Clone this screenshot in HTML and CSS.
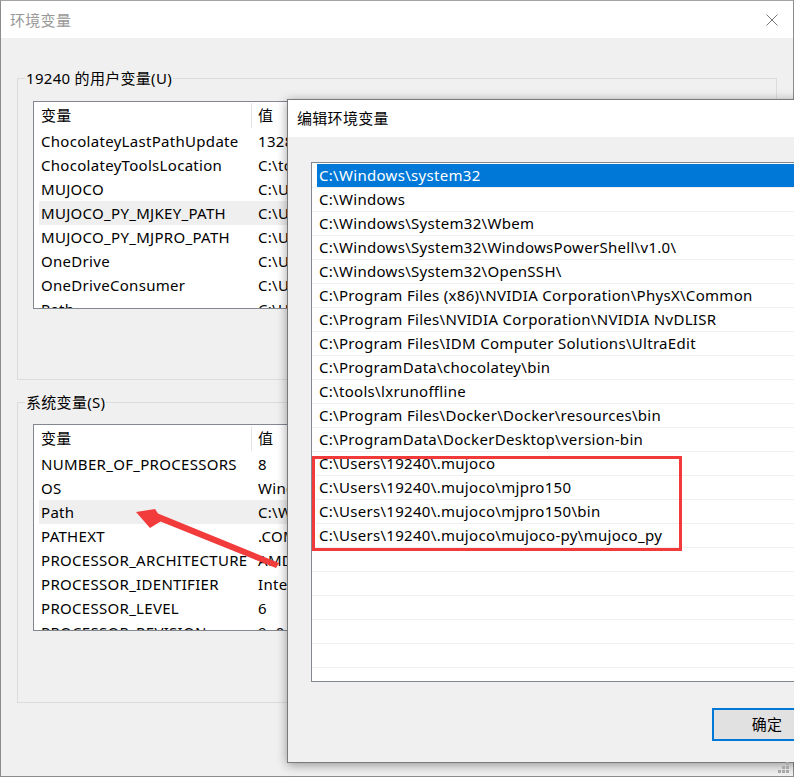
FILE: index.html
```html
<!DOCTYPE html>
<html lang="zh-CN">
<head>
<meta charset="utf-8">
<title>环境变量</title>
<link rel="stylesheet" href="styles.css">
</head>
<body>
<div class="screen">
  <div class="win">
    <div class="titlebar">
      <span class="title">环境变量</span>
      <svg class="close" width="12" height="12" viewBox="0 0 12 12"><path d="M0.5 0.5 L11.5 11.5 M11.5 0.5 L0.5 11.5" stroke="#777" stroke-width="1" fill="none"/></svg>
    </div>
    <div class="content">
      <div class="group g1">
        <div class="legend">19240 的用户变量(U)</div>
        <div class="list ulist">
          <div class="lhead"><div class="hc1">变量</div><div class="hc2">值</div></div>
          <div class="row"><div class="c1">ChocolateyLastPathUpdate</div><div class="c2">132847293847562</div></div>
          <div class="row"><div class="c1">ChocolateyToolsLocation</div><div class="c2">C:\tools</div></div>
          <div class="row"><div class="c1">MUJOCO</div><div class="c2">C:\Users\19240\.mujoco</div></div>
          <div class="row hover"><div class="c1">MUJOCO_PY_MJKEY_PATH</div><div class="c2">C:\Users\19240\.mujoco\mjkey.txt</div></div>
          <div class="row"><div class="c1">MUJOCO_PY_MJPRO_PATH</div><div class="c2">C:\Users\19240\.mujoco\mjpro150</div></div>
          <div class="row"><div class="c1">OneDrive</div><div class="c2">C:\Users\19240\OneDrive</div></div>
          <div class="row"><div class="c1">OneDriveConsumer</div><div class="c2">C:\Users\19240\OneDrive</div></div>
          <div class="row"><div class="c1">Path</div><div class="c2">C:\Users\19240\AppData\Local</div></div>
        </div>
      </div>
      <div class="group g2">
        <div class="legend">系统变量(S)</div>
        <div class="list slist">
          <div class="lhead"><div class="hc1">变量</div><div class="hc2">值</div></div>
          <div class="row"><div class="c1">NUMBER_OF_PROCESSORS</div><div class="c2">8</div></div>
          <div class="row"><div class="c1">OS</div><div class="c2">Windows_NT</div></div>
          <div class="row hover"><div class="c1">Path</div><div class="c2">C:\Windows\system32</div></div>
          <div class="row"><div class="c1">PATHEXT</div><div class="c2">.COM;.EXE;.BAT</div></div>
          <div class="row"><div class="c1">PROCESSOR_ARCHITECTURE</div><div class="c2">AMD64</div></div>
          <div class="row"><div class="c1">PROCESSOR_IDENTIFIER</div><div class="c2">Intel64 Family 6</div></div>
          <div class="row"><div class="c1">PROCESSOR_LEVEL</div><div class="c2">6</div></div>
          <div class="row"><div class="c1">PROCESSOR_REVISION</div><div class="c2">9e0a</div></div>
        </div>
      </div>
    </div>
    <svg class="arrow" width="300" height="600" viewBox="0 0 300 600">
      <polygon points="136,512 155,509 158,513.5 279,563 276,568 160.5,521.5 150,528" fill="#f23c3c"/>
    </svg>
    <svg class="grip" width="12" height="12" viewBox="0 0 12 12" fill="#a8a8a8">
      <rect x="8" y="0" width="3" height="3"/>
      <rect x="4" y="4" width="3" height="3"/><rect x="8" y="4" width="3" height="3"/>
      <rect x="0" y="8" width="3" height="3"/><rect x="4" y="8" width="3" height="3"/><rect x="8" y="8" width="3" height="3"/>
    </svg>
  </div>

  <div class="dialog">
    <div class="dtitle">编辑环境变量</div>
    <div class="dbody">
      <div class="elist">
        <div class="item sel"><div class="t">C:\Windows\system32</div></div>
        <div class="item"><div class="t">C:\Windows</div></div>
        <div class="item"><div class="t">C:\Windows\System32\Wbem</div></div>
        <div class="item"><div class="t">C:\Windows\System32\WindowsPowerShell\v1.0\</div></div>
        <div class="item"><div class="t">C:\Windows\System32\OpenSSH\</div></div>
        <div class="item"><div class="t">C:\Program Files (x86)\NVIDIA Corporation\PhysX\Common</div></div>
        <div class="item"><div class="t">C:\Program Files\NVIDIA Corporation\NVIDIA NvDLISR</div></div>
        <div class="item"><div class="t">C:\Program Files\IDM Computer Solutions\UltraEdit</div></div>
        <div class="item"><div class="t">C:\ProgramData\chocolatey\bin</div></div>
        <div class="item"><div class="t">C:\tools\lxrunoffline</div></div>
        <div class="item"><div class="t">C:\Program Files\Docker\Docker\resources\bin</div></div>
        <div class="item"><div class="t">C:\ProgramData\DockerDesktop\version-bin</div></div>
        <div class="item"><div class="t">C:\Users\19240\.mujoco</div></div>
        <div class="item"><div class="t">C:\Users\19240\.mujoco\mjpro150</div></div>
        <div class="item"><div class="t">C:\Users\19240\.mujoco\mjpro150\bin</div></div>
        <div class="item"><div class="t">C:\Users\19240\.mujoco\mujoco-py\mujoco_py</div></div>
        <div class="item"><div class="t"></div></div>
        <div class="item"><div class="t"></div></div>
        <div class="item"><div class="t"></div></div>
        <div class="item"><div class="t"></div></div>
        <div class="item"><div class="t"></div></div>
        <div class="item"><div class="t"></div></div>
      </div>
      <div class="btnrow"><div class="btn">确定</div></div>
    </div>
    <div class="redbox"></div>
  </div>
</div>
</body>
</html>
```

FILE: styles.css
```css
html, body {
  margin: 0;
  padding: 0;
}
body {
  width: 794px;
  height: 777px;
  overflow: hidden;
  background: #ffffff;
  font-family: "Noto Sans", "Noto Sans CJK SC", sans-serif;
  font-size: 15px;
  letter-spacing: 0.3px;
  color: #000;
}
.screen {
  position: relative;
  width: 794px;
  height: 777px;
  overflow: hidden;
}
.win {
  position: relative;
  box-sizing: border-box;
  width: 794px;
  height: 777px;
  background: #f0f0f0;
  border-top: 1px solid #a4a4a4;
  border-left: 1px solid #8c8c8c;
  border-right: 1px solid #8c8c8c;
  border-bottom: 1px solid #8c8c8c;
}
.titlebar {
  height: 37px;
  background: #ffffff;
  display: flex;
  align-items: center;
  justify-content: space-between;
  padding: 0 15px 0 9px;
}
.title {
  color: #999999;
  line-height: 20px;
}
.close {
  display: block;
  margin-top: 1px;
}
.content {
  padding: 0 16px 0 16px;
}
.group {
  box-sizing: border-box;
  border: 1px solid #dcdcdc;
  padding: 0 15px;
}
.g1 {
  margin-top: 40px;
  height: 302px;
}
.g2 {
  margin-top: 22px;
  height: 301px;
}
.legend {
  display: block;
  width: max-content;
  margin-top: -11px;
  margin-left: -8px;
  padding: 0 1px;
  line-height: 20px;
  height: 20px;
  background: #f0f0f0;
  white-space: nowrap;
}
.list {
  box-sizing: border-box;
  border: 1px solid #828790;
  background: #ffffff;
  overflow: hidden;
}
.ulist {
  margin-top: 13px;
  height: 208px;
}
.slist {
  margin-top: 12px;
  height: 207px;
}
.lhead {
  display: flex;
  height: 27px;
}
.hc1 {
  box-sizing: border-box;
  width: 218px;
  height: 25px;
  margin-top: 1px;
  padding-left: 7px;
  line-height: 25px;
  border-right: 1px solid #e5e5e5;
}
.hc2 {
  padding-left: 6px;
  line-height: 27px;
  white-space: nowrap;
}
.row {
  display: flex;
  height: 24px;
  line-height: 24px;
  margin-left: 5px;
  white-space: nowrap;
}
.row.hover {
  background: #efefef;
}
.c1 {
  box-sizing: border-box;
  width: 213px;
  padding-left: 2px;
  overflow: hidden;
}
.c2 {
  padding-left: 6px;
}
.arrow {
  position: absolute;
  left: -1px;
  top: -1px;
}
.grip {
  position: absolute;
  right: 3px;
  bottom: 2px;
  z-index: 5;
}

.dialog {
  position: absolute;
  left: 287px;
  top: 99px;
  box-sizing: border-box;
  width: 560px;
  height: 664px;
  border: 1px solid #7a7a7a;
  background: #f0f0f0;
  box-shadow: 0 2px 10px rgba(0, 0, 0, 0.38);
  z-index: 2;
}
.dtitle {
  height: 37px;
  line-height: 37px;
  background: #ffffff;
  padding-left: 9px;
}
.dbody {
  padding: 25px 0 0 23px;
}
.elist {
  box-sizing: border-box;
  height: 520px;
  border: 1px solid #828790;
  background: #ffffff;
  padding-top: 1px;
  overflow: hidden;
}
.item {
  height: 23px;
  border-bottom: 1px solid #efefef;
}
.item .t {
  margin-left: 5px;
  padding-left: 2px;
  height: 23px;
  line-height: 23px;
  white-space: nowrap;
}
.item.sel .t {
  background: #0078d7;
  color: #ffffff;
}
.btnrow {
  margin-top: 26px;
  padding-left: 401px;
}
.btn {
  box-sizing: border-box;
  width: 110px;
  height: 33px;
  border: 2px solid #0078d7;
  background: #e1e1e1;
  text-align: center;
  line-height: 29px;
}
.redbox {
  position: absolute;
  left: 24px;
  top: 356px;
  width: 370px;
  height: 95px;
  box-sizing: border-box;
  border: 3px solid #f23a3a;
}
```
